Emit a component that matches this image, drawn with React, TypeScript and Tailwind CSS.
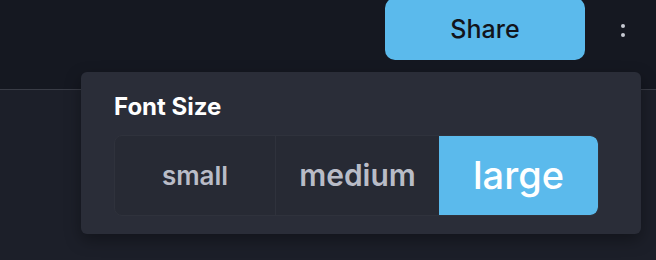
import React from "react";

export default function App() {
  const font = { fontFamily: "Inter, 'Noto Sans', sans-serif" };
  return (
    <div className="relative w-[656px] h-[260px] overflow-hidden bg-[#1c1f29]" style={font}>
      <div className="h-[90px] bg-[#151821] border-b border-[#393c46] flex items-start justify-end pr-[21px]">
        <button className="-mt-[2px] h-[62px] w-[200px] rounded-[10px] bg-[#5bbaec] text-[#12141b] text-[25px] font-medium flex items-center justify-center pt-[2px]">
          Share
        </button>
        <div className="ml-[26px] w-[24px] h-[60px] flex flex-col items-center justify-center gap-[5px] pt-[1px]">
          <span className="block w-[4px] h-[4px] rounded-full bg-[#c7cad2]" />
          <span className="block w-[4px] h-[4px] rounded-full bg-[#c7cad2]" />
        </div>
      </div>
      <div className="absolute left-[81px] top-[72px] w-[560px] h-[162px] rounded-[6px] bg-[#2a2d38] shadow-[0_6px_16px_rgba(0,0,0,0.35)] pl-[33px] pt-[19px]">
        <div className="text-[24px] leading-[32px] font-bold text-white">Font Size</div>
        <div className="mt-[12px] w-[485px] h-[81px] rounded-[8px] border border-[#2f323c] bg-[#272a34] flex overflow-hidden">
          <div className="w-[161px] flex items-center justify-center border-r border-[#2f323c] text-[26px] font-semibold text-[#b9bcc7]">
            small
          </div>
          <div className="w-[163px] flex items-center justify-center text-[30px] font-semibold text-[#b9bcc7]">
            medium
          </div>
          <div className="flex-1 flex items-center justify-center bg-[#5bbaec] rounded-r-[8px] text-[38px] font-medium text-white">
            large
          </div>
        </div>
      </div>
    </div>
  );
}
